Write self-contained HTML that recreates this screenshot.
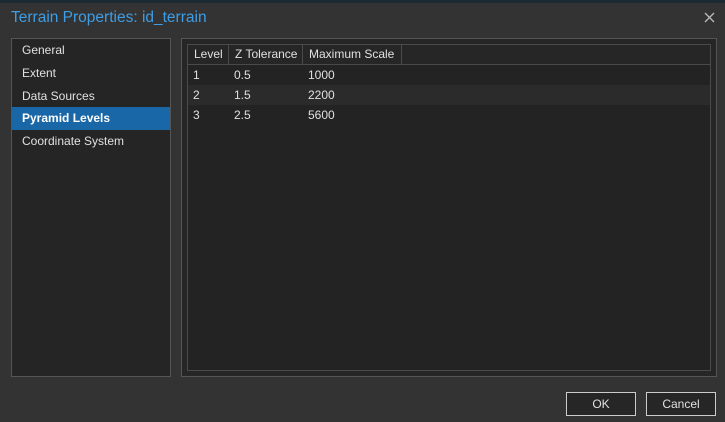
<!DOCTYPE html>
<html><head><style>
body{margin:0;width:725px;height:422px;background:#333;position:relative;overflow:hidden;font-family:"Liberation Sans",sans-serif;font-size:12px;color:#e0e0e0}
.a{position:absolute}
.top{left:0;top:0;width:725px;height:3px;background:#1b2a33}
.title{left:11px;top:9px;font-size:15.5px;color:#3d9de6}
.lp{left:11px;top:38px;width:158px;height:337px;background:#252525;border:1px solid #555}
.it{position:absolute;left:0;width:158px;height:23px;line-height:22px;padding-left:10px;box-sizing:border-box}
.sel{background:#1a67a8;font-weight:bold;color:#fff}
.rp{left:181px;top:38px;width:534px;height:337px;background:#262626;border:1px solid #555}
.gr{left:187px;top:44px;width:522px;height:325px;background:#232323;border:1px solid #4a4a4a}
.hd{position:absolute;top:0;height:20px;line-height:19px;border-right:1px solid #4a4a4a;padding-left:6px;box-sizing:border-box}
.row{position:absolute;left:0;width:522px;height:20px;line-height:20px}
.row span{position:absolute}
.btn{top:392px;width:68px;height:22px;border:1px solid #ccc;background:#262626;text-align:center;line-height:22px}
</style></head><body>
<div class="a top"></div>
<div class="a title">Terrain Properties: id_terrain</div>
<svg class="a" style="left:704px;top:12px" width="11" height="11"><path d="M1 1L10 10M10 1L1 10" stroke="#bbb" stroke-width="1.3"/></svg>
<div class="a lp">
<div class="it" style="top:0">General</div>
<div class="it" style="top:23px">Extent</div>
<div class="it" style="top:46px">Data Sources</div>
<div class="it sel" style="top:68px">Pyramid Levels</div>
<div class="it" style="top:91px">Coordinate System</div>
</div>
<div class="a rp"></div>
<div class="a gr">
<div style="position:absolute;left:0;top:0;width:522px;height:20px;border-bottom:1px solid #4a4a4a;box-sizing:border-box;background:#262626"></div>
<div class="hd" style="left:0;width:41px">Level</div>
<div class="hd" style="left:41px;width:74px">Z Tolerance</div>
<div class="hd" style="left:115px;width:99px">Maximum Scale</div>
<div class="row" style="top:20px"><span style="left:5px">1</span><span style="left:46px">0.5</span><span style="left:120px">1000</span></div>
<div class="row" style="top:40px;background:#2b2b2b"><span style="left:5px">2</span><span style="left:46px">1.5</span><span style="left:120px">2200</span></div>
<div class="row" style="top:60px"><span style="left:5px">3</span><span style="left:46px">2.5</span><span style="left:120px">5600</span></div>
</div>
<div class="a btn" style="left:566px">OK</div>
<div class="a btn" style="left:646px">Cancel</div>
</body></html>
